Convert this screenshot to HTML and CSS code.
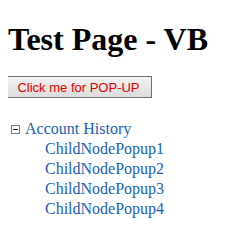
FILE: index.html
```html
<!DOCTYPE html>
<html lang="en">
<head>
    <meta charset="UTF-8">
    <title>Test Page - VB</title>
    <link rel="stylesheet" href="styles.css">
</head>
<body>
    <h1>Test Page - VB</h1>

    <div class="actions">
        <button class="popup-btn">Click me for POP-UP</button>
    </div>

    <div class="tree">
        <div class="tree-node">
            <span class="toggle">
                <svg width="9" height="9" viewBox="0 0 9 9">
                    <rect x="0.5" y="0.5" width="8" height="8" fill="#fff" stroke="#7a7a7a"/>
                    <rect x="2" y="4" width="5" height="1" fill="#222"/>
                </svg>
            </span>
            <a href="#">Account History</a>
        </div>
        <div class="tree-children">
            <a href="#">ChildNodePopup1</a>
            <a href="#">ChildNodePopup2</a>
            <a href="#">ChildNodePopup3</a>
            <a href="#">ChildNodePopup4</a>
        </div>
    </div>
</body>
</html>
```

FILE: styles.css
```css
body {
    margin: 8px;
    font-family: 'Liberation Serif', 'Times New Roman', serif;
    background-color: #fff;
    color: #000;
}

h1 {
    font-size: 32px;
    font-weight: bold;
    margin: 13px 0 18px 0;
}

.actions {
    margin-bottom: 21px;
}

.popup-btn {
    font-family: 'Liberation Sans', Arial, sans-serif;
    font-size: 13px;
    color: #e00000;
    background: linear-gradient(#f3f3f3, #dcdcdc);
    border: 1px solid #707070;
    width: 147px;
    height: 22px;
    margin-left: -3px;
    padding: 0;
}

.tree {
    font-size: 16px;
}

.tree a {
    color: #1a62b0;
    text-decoration: none;
}

.tree-node {
    display: flex;
    align-items: center;
    height: 20px;
    margin-left: 3px;
}

.toggle {
    display: flex;
    width: 14px;
}

.tree-children {
    display: flex;
    flex-direction: column;
    padding-left: 37px;
}

.tree-children a {
    height: 20px;
    line-height: 20px;
}
```
